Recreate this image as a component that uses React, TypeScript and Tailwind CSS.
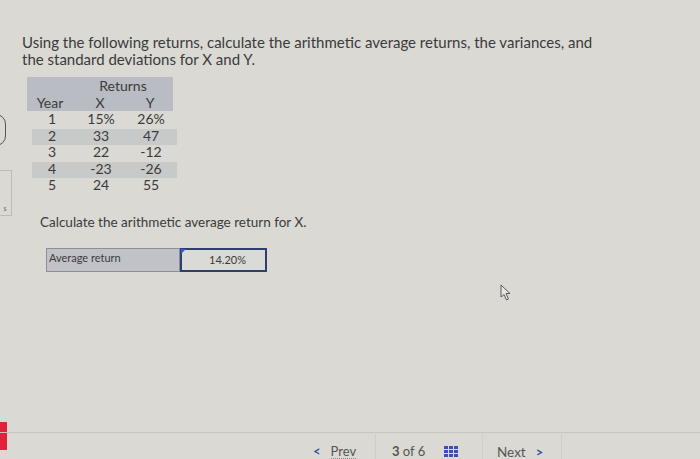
import React from "react";

const rows = [
  ["1", "15%", "26%", false],
  ["2", "33", "47", true],
  ["3", "22", "-12", false],
  ["4", "-23", "-26", true],
  ["5", "24", "55", false],
] as const;

export default function App() {
  return (
    <div
      className="relative w-[700px] h-[459px] overflow-hidden bg-[#dad9d4] text-[#3b3b3b]"
      style={{ fontFamily: "Lato, 'Open Sans', sans-serif" }}
    >
      {/* left edge fragments */}
      <div className="absolute left-[-14px] top-[114px] w-[20px] h-[32px] rounded-full border border-[#555]" />
      <div className="absolute left-[-2px] top-[170px] w-[14px] h-[46px] border border-[#bcbcb8] flex items-end justify-center pb-[2px]">
        <span className="text-[7px] text-[#666]">s</span>
      </div>
      <div className="absolute left-0 top-[422px] w-[7px] h-[28px] bg-[#e3213a]" />

      <div className="pl-[22px] pt-[34px] flex flex-col">
        <p className="text-[15px] leading-[17px] w-[582px]">
          Using the following returns, calculate the arithmetic average returns, the variances, and
          the standard deviations for X and Y.
        </p>

        <div className="mt-[9px] ml-[5px] w-[150px] text-[14px] leading-[16.5px]">
          <div className="bg-[#b9bcc3] h-[34px] w-[146px]">
            <div className="flex pt-[1px]">
              <div className="w-[46px]" />
              <div className="w-[100px] text-center">Returns</div>
            </div>
            <div className="flex">
              <div className="w-[46px] text-center">Year</div>
              <div className="w-[54px] text-center">X</div>
              <div className="w-[46px] text-center">Y</div>
            </div>
          </div>
          {rows.map(([yr, x, y, shade]) => (
            <div key={yr} className="relative flex h-[16.5px]">
              {shade && <div className="absolute left-[5px] right-0 top-[1px] bottom-[-1px] bg-[#c8c9c9]" />}
              <div className="relative w-[50px] text-center">{yr}</div>
              <div className="relative w-[48px] text-center">{x}</div>
              <div className="relative w-[52px] text-center">{y}</div>
            </div>
          ))}
        </div>

        <p className="mt-[18px] ml-[18px] text-[13.5px] leading-[21px]">
          Calculate the arithmetic average return for X.
        </p>

        <div className="mt-[15px] ml-[24px] flex w-[221px] h-[24px] text-[11px]">
          <div className="w-[134px] bg-[#c1c2c7] border border-[#8c8f96] pl-[2px] leading-[18px]">
            Average return
          </div>
          <div className="relative flex-1 border-2 border-[#2e3f6e] flex items-center justify-center bg-[#dadad6]">
            <span className="absolute left-[-1px] top-[-1px] w-0 h-0 border-t-[5px] border-t-[#2e60c4] border-r-[5px] border-r-transparent" />
            <span className="pt-[1px] pl-[8px]">14.20%</span>
          </div>
        </div>
      </div>

      {/* cursor */}
      <svg className="absolute left-[499px] top-[284px]" width="14" height="18" viewBox="0 0 14 18">
        <path d="M2 1 L2 13 L5 10.5 L7.5 16 L9.5 15 L7 9.5 L11 9.5 Z" fill="#e6e6e2" stroke="#5a5a5a" strokeWidth="1" />
      </svg>

      {/* bottom nav */}
      <div className="absolute left-0 right-0 top-[432px] h-[1px] bg-[#c6c6c1]" />
      <div className="absolute left-[300px] top-[432px] flex items-center h-[27px] text-[13px] text-[#555]">
        <div className="flex items-center w-[75px] pl-[13px] gap-[10px] pt-[12px]">
          <span className="text-[#2f4fa6] text-[13px] font-bold">&lt;</span>
          <span className="border-b border-dotted border-[#888] leading-[13px]">Prev</span>
        </div>
        <div className="h-[27px] w-[1px] bg-[#cfcfca]" />
        <div className="flex items-center pl-[16px] pt-[12px] w-[106px]">
          <span className="text-[13px]"><b className="font-bold">3</b> of 6</span>
          <div className="ml-[19px] grid grid-cols-3 gap-[1px]">
            {Array.from({ length: 9 }).map((_, i) => (
              <div key={i} className="w-[4px] h-[3px] bg-[#3a4fb8]" />
            ))}
          </div>
        </div>
        <div className="h-[27px] w-[1px] bg-[#cfcfca]" />
        <div className="flex items-center pl-[14px] gap-[10px] pt-[14px] w-[78px]">
          <span className="text-[13.5px]">Next</span>
          <span className="text-[#2f4fa6] text-[13px] font-bold">&gt;</span>
        </div>
        <div className="h-[27px] w-[1px] bg-[#cfcfca]" />
      </div>
    </div>
  );
}
